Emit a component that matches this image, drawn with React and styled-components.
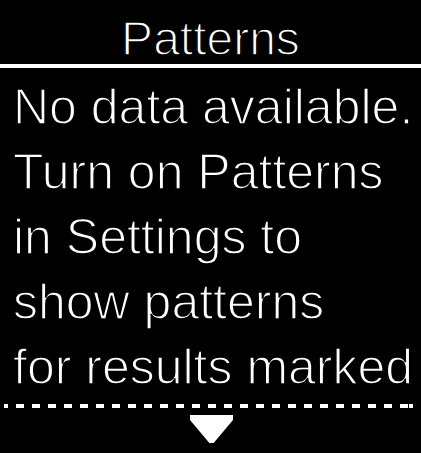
import styled, { createGlobalStyle } from 'styled-components';

const GlobalStyle = createGlobalStyle`
  html, body {
    margin: 0;
    padding: 0;
    background: #000;
  }
`;

const lines = [
    'No data available.',
    'Turn on Patterns',
    'in Settings to',
    'show patterns',
    'for results marked',
];

export default function App() {
    return (
        <>
            <GlobalStyle />
            <Screen>
                <Header>Patterns</Header>
                <Divider />
                <Body>
                    {lines.map((line) => <Line key={line}>{line}</Line>)}
                </Body>
                <DottedRule />
                <ScrollArrow />
            </Screen>
        </>
    );
}

const Screen = styled.main`
width: 421px;
height: 453px;
background-color: #000;
color: #fff;
font-family: "Liberation Sans", Arial, sans-serif;
-webkit-text-stroke: 1.5px #000;
display: flex;
flex-direction: column;
overflow: hidden;
`;

const Header = styled.header`
padding-top: 13px;
line-height: 51px;
font-size: 48px;
text-align: center;
white-space: nowrap;
`;

const Divider = styled.div`
height: 4px;
background-color: #fff;
`;

const Body = styled.section`
padding: 7px 0 0 13px;
display: flex;
flex-direction: column;
`;

const Line = styled.div`
font-size: 50px;
line-height: 65px;
height: 65px;
white-space: nowrap;
`;

const DottedRule = styled.div`
margin: 4px 8px 0 4px;
height: 4px;
background-image: repeating-linear-gradient(to right, #fff 0 8px, transparent 8px 16px);
background-position: -4px 0;
`;

const ScrollArrow = styled.div`
align-self: center;
margin-top: 7px;
margin-left: 2px;
width: 43px;
height: 28px;
background-color: #fff;
clip-path: polygon(0 0, 100% 0, 100% 18%, 55% 100%, 45% 100%, 0 18%);
`;
